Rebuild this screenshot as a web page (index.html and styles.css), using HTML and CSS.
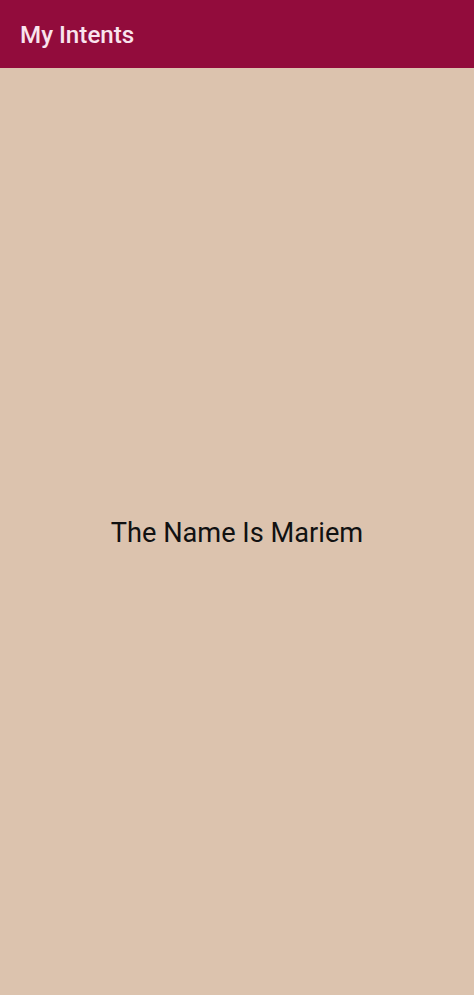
FILE: index.html
```html
<!DOCTYPE html>
<html>
<head>
<meta charset="utf-8">
<link rel="stylesheet" href="styles.css">
</head>
<body>
<div class="app">
  <header class="appbar"><span class="title">My Intents</span></header>
  <main class="content"><p class="name">The Name Is Mariem</p></main>
</div>
</body>
</html>
```
FILE: styles.css
```css
html, body { margin: 0; padding: 0; height: 100%; }
body { font-family: Roboto, "Noto Sans", sans-serif; background: #dcc3ae; }
.app { display: flex; flex-direction: column; height: 995px; }
.appbar { box-sizing: border-box; height: 68px; background: #920c3c; display: flex; align-items: center; padding: 2px 0 0 20px; flex-shrink: 0; }
.title { color: #f9e4ee; font-size: 24.2px; font-weight: 500; }
.content { flex: 1; display: flex; align-items: center; justify-content: center; padding-top: 2px; }
.name { margin: 0; font-size: 27.2px; color: #111; }
```
